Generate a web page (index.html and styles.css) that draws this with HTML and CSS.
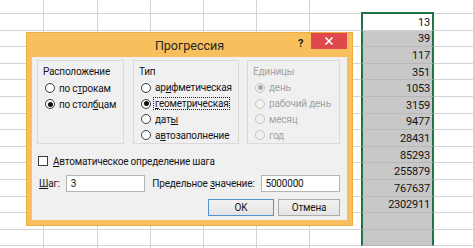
FILE: index.html
```html
<!DOCTYPE html>
<html lang="ru">
<head>
<meta charset="utf-8">
<title>Прогрессия</title>
<link rel="stylesheet" href="styles.css">
</head>
<body>
<div class="sheet">
  <div class="row r0"><div class="cl"></div><div class="cs top"></div><div class="cr"></div></div>
  <div class="row"><div class="cl"></div><div class="cs sel first">13</div><div class="cr"></div></div>
  <div class="row"><div class="cl"></div><div class="cs sel gray">39</div><div class="cr"></div></div>
  <div class="row"><div class="cl"></div><div class="cs sel gray">117</div><div class="cr"></div></div>
  <div class="row"><div class="cl"></div><div class="cs sel gray">351</div><div class="cr"></div></div>
  <div class="row"><div class="cl"></div><div class="cs sel gray">1053</div><div class="cr"></div></div>
  <div class="row"><div class="cl"></div><div class="cs sel gray">3159</div><div class="cr"></div></div>
  <div class="row"><div class="cl"></div><div class="cs sel gray">9477</div><div class="cr"></div></div>
  <div class="row"><div class="cl"></div><div class="cs sel gray">28431</div><div class="cr"></div></div>
  <div class="row"><div class="cl"></div><div class="cs sel gray">85293</div><div class="cr"></div></div>
  <div class="row"><div class="cl"></div><div class="cs sel gray">255879</div><div class="cr"></div></div>
  <div class="row"><div class="cl"></div><div class="cs sel gray">767637</div><div class="cr"></div></div>
  <div class="row"><div class="cl"></div><div class="cs sel gray">2302911</div><div class="cr"></div></div>
  <div class="row"><div class="cl"></div><div class="cs sel gray"></div><div class="cr"></div></div>
  <div class="row"><div class="cl"></div><div class="cs sel gray"></div><div class="cr"></div></div>
</div>

<div class="dialog">
  <div class="titlebar">
    <span class="title">Прогрессия</span>
    <span class="help">?</span>
    <span class="close"><svg width="10" height="10" viewBox="0 0 10 10"><path d="M1.5 1.5 L8.5 8.5 M8.5 1.5 L1.5 8.5" stroke="#fff" stroke-width="1.6" fill="none"/></svg></span>
  </div>
  <div class="client">
    <div class="groups">
      <div class="grp g1">
        <div class="legend">Расположение</div>
        <div class="opt"><span class="radio"></span><span>по с<u>т</u>рокам</span></div>
        <div class="opt"><span class="radio on"></span><span>по стол<u>б</u>цам</span></div>
      </div>
      <div class="grp g2">
        <div class="legend">Тип</div>
        <div class="opt"><span class="radio"></span><span>ар<u>и</u>фметическая</span></div>
        <div class="opt"><span class="radio on"></span><span class="focus"><u>г</u>еометрическая</span></div>
        <div class="opt"><span class="radio"></span><span>дат<u>ы</u></span></div>
        <div class="opt"><span class="radio"></span><span>а<u>в</u>тозаполнение</span></div>
      </div>
      <div class="grp g3 disabled">
        <div class="legend">Единицы</div>
        <div class="opt"><span class="radio on"></span><span>день</span></div>
        <div class="opt"><span class="radio"></span><span>рабочий день</span></div>
        <div class="opt"><span class="radio"></span><span>месяц</span></div>
        <div class="opt"><span class="radio"></span><span>год</span></div>
      </div>
    </div>
    <div class="check"><span class="box"></span><span><u>А</u>втоматическое определение шага</span></div>
    <div class="fields">
      <span class="lbl step-lbl"><u>Ш</u>аг:</span>
      <span class="input step-in">3</span>
      <span class="lbl limit-lbl">Предельное <u>з</u>начение:</span>
      <span class="input limit-in">5000000</span>
    </div>
    <div class="buttons">
      <span class="btn ok">OK</span>
      <span class="btn cancel">Отмена</span>
    </div>
  </div>
</div>
</body>
</html>
```

FILE: styles.css
```css
* { box-sizing: border-box; }
html, body { margin: 0; padding: 0; }
body {
  width: 474px;
  height: 248px;
  overflow: hidden;
  background: #fff;
  position: relative;
  font-family: Roboto, "Liberation Sans", sans-serif;
}

/* spreadsheet */
.sheet {
  display: flex;
  flex-direction: column;
  height: 248px;
  background-image:
    linear-gradient(#d4d4d4, #d4d4d4),
    linear-gradient(#d4d4d4, #d4d4d4),
    linear-gradient(#d4d4d4, #d4d4d4),
    linear-gradient(#d4d4d4, #d4d4d4),
    linear-gradient(#d4d4d4, #d4d4d4),
    linear-gradient(#d4d4d4, #d4d4d4),
    linear-gradient(#d4d4d4, #d4d4d4);
  background-size: 1px 100%;
  background-repeat: no-repeat;
  background-position: 43px 0, 97px 0, 150px 0, 203px 0, 256px 0, 309px 0, 473px 0;
}
.row {
  display: grid;
  grid-template-columns: 361px 73px 1fr;
  height: 16.6px;
  flex: none;
}
.row.r0 { height: 14px; }
.cl, .cr { border-bottom: 1px solid #d4d4d4; }
.cs {
  border-bottom: 1px solid #d4d4d4;
  display: flex;
  align-items: center;
  justify-content: flex-end;
  padding-right: 2px;
  padding-top: 1px;
  font-size: 11px;
  color: #141414;
  letter-spacing: -0.2px;
}
.cs.top { border-bottom: 2px solid #217346; }
.cs.sel { border-left: 2px solid #217346; border-right: 2px solid #217346; }
.cs.first { border-bottom-color: #d0d0d0; background: #fff; }
.cs.gray { background: #c8c8c8; border-bottom-color: #b8b8b8; }

/* dialog window */
.dialog {
  position: absolute;
  left: 26px;
  top: 32px;
  width: 327px;
  height: 194px;
  background: #f8c05c;
  border: 1px solid #eeae45;
  padding: 0 5px 5px;
  display: flex;
  flex-direction: column;
}
.titlebar {
  height: 24px;
  flex: none;
  position: relative;
  display: flex;
  align-items: center;
  justify-content: center;
}
.title {
  font-size: 12.5px;
  color: #262626;
  padding-top: 1px;
}
.help {
  position: absolute;
  left: 266px;
  top: 4px;
  font-size: 11px;
  font-weight: bold;
  color: #1a1a1a;
}
.close {
  position: absolute;
  right: 0;
  top: 0;
  width: 36px;
  height: 16px;
  background: #e0494b;
  display: flex;
  align-items: center;
  justify-content: center;
}
.client {
  flex: 1;
  background: #f0f0f0;
  padding: 3px 7px 0 5px;
  font-size: 10px;
  color: #151515;
  letter-spacing: -0.2px;
  display: flex;
  flex-direction: column;
}
.groups {
  display: flex;
  height: 84px;
}
.grp {
  border: 1px solid #dadada;
  padding: 4px 0 0 7px;
  display: flex;
  flex-direction: column;
}
.g1 { width: 87px; }
.g2 { width: 106px; margin-left: 9px; }
.g3 { width: 93px; margin-left: 8px; }
.legend {
  height: 13px;
  line-height: 13px;
  margin-left: -2px;
  margin-bottom: 2px;
}
.opt {
  height: 16px;
  display: flex;
  align-items: center;
  gap: 4px;
}
.radio {
  width: 10px;
  height: 10px;
  border-radius: 50%;
  border: 1px solid #3c3c3c;
  background: #fff;
  display: flex;
  align-items: center;
  justify-content: center;
  flex: none;
}
.radio.on::after {
  content: "";
  width: 5px;
  height: 5px;
  border-radius: 50%;
  background: #111;
}
.focus {
  outline: 1px dotted #222;
  outline-offset: 0;
  padding: 0 1px;
  margin-left: -1px;
}
.disabled { color: #a3a3a3; }
.disabled .radio { border-color: #c4c4c4; background: #f2f2f2; }
.disabled .radio.on::after { background: #a8a8a8; }

.check {
  margin-top: 11px;
  height: 12px;
  display: flex;
  align-items: center;
  gap: 5px;
  padding-left: 1px;
}
.box {
  width: 10px;
  height: 10px;
  border: 1px solid #3c3c3c;
  background: #fff;
  flex: none;
}
.fields {
  margin-top: 8px;
  height: 17px;
  display: flex;
  align-items: center;
}
.lbl { white-space: nowrap; }
.step-lbl { margin-left: 2px; width: 27px; }
.input {
  height: 17px;
  width: 80px;
  background: #fff;
  border: 1px solid #b5b5b5;
  padding-left: 4px;
  display: flex;
  align-items: center;
}
.limit-lbl { margin-left: 7px; width: 109px; }
.buttons {
  margin-top: 7px;
  display: flex;
  justify-content: flex-end;
  gap: 4px;
}
.btn {
  height: 17px;
  background: linear-gradient(#f2f2f2, #e4e4e4);
  border: 1px solid #acacac;
  display: flex;
  align-items: center;
  justify-content: center;
}
.btn.ok { width: 66px; border-color: #4f93d4; }
.btn.cancel { width: 62px; }
```
